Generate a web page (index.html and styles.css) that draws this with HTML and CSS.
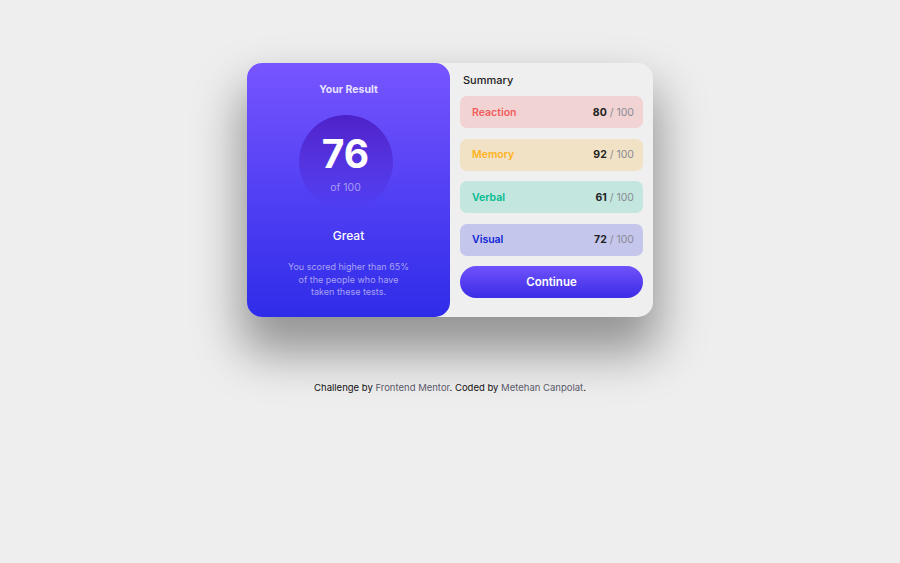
FILE: index.html
```html
<!DOCTYPE html>
<html lang="en">
<head>
<meta charset="utf-8">
<title>Results summary</title>
<link rel="stylesheet" href="styles.css">
</head>
<body>
<main class="card">
  <section class="result">
    <h1 class="result-title">Your Result</h1>
    <div class="score-circle">
      <span class="score">76</span>
      <span class="score-of">of 100</span>
    </div>
    <p class="grade">Great</p>
    <p class="desc">You scored higher than 65% of the people who have taken these tests.</p>
  </section>
  <section class="summary">
    <h2 class="summary-title">Summary</h2>
    <ul class="rows">
      <li class="row row-reaction"><span class="label">Reaction</span><span class="value"><b>80</b> / 100</span></li>
      <li class="row row-memory"><span class="label">Memory</span><span class="value"><b>92</b> / 100</span></li>
      <li class="row row-verbal"><span class="label">Verbal</span><span class="value"><b>61</b> / 100</span></li>
      <li class="row row-visual"><span class="label">Visual</span><span class="value"><b>72</b> / 100</span></li>
    </ul>
    <button class="continue">Continue</button>
  </section>
</main>
<footer class="attribution">
  Challenge by <a href="#">Frontend Mentor</a>. Coded by <a href="#">Metehan Canpolat</a>.
</footer>
</body>
</html>
```

FILE: styles.css
```css
* { box-sizing: border-box; }
html, body { margin: 0; padding: 0; }
body {
  background: #eeeeee;
  font-family: "Inter", "Noto Sans", sans-serif;
  display: flex;
  flex-direction: column;
  align-items: center;
  padding-top: 63px;
  min-height: 563px;
}
.card {
  display: flex;
  width: 406px;
  height: 254px;
  background: #efefef;
  border-radius: 15px;
  box-shadow: 0 30px 48px 6px rgba(0,0,0,0.38);
}
.result {
  width: 203px;
  border-radius: 15px;
  background: linear-gradient(180deg, #7755ff 0%, #2f2ce9 100%);
  display: flex;
  flex-direction: column;
  align-items: center;
  padding-top: 20px;
  text-align: center;
}
.result-title {
  margin: 0;
  font-size: 10.5px;
  font-weight: 700;
  color: #e6e2ff;
  line-height: 14px;
}
.score-circle {
  margin: 18px 6px 0 0;
  width: 94px;
  height: 94px;
  border-radius: 50%;
  background: linear-gradient(180deg, rgba(77,33,201,1) 0%, rgba(37,33,201,0) 100%);
  display: flex;
  flex-direction: column;
  align-items: center;
  padding-top: 17px;
}
.score {
  font-size: 39px;
  font-weight: 700;
  color: #ffffff;
  line-height: 44px;
}
.score-of {
  margin-top: 5px;
  font-size: 10.5px;
  color: #a99cf5;
  line-height: 14px;
}
.grade {
  margin: 19px 0 0;
  font-size: 12px;
  font-weight: 500;
  color: #ffffff;
  line-height: 16px;
}
.desc {
  margin: 17px 0 0;
  width: 124px;
  font-size: 9px;
  line-height: 12.5px;
  color: #a8a3f3;
}
.summary {
  flex: 1;
  padding: 9px 10px 0;
  display: flex;
  flex-direction: column;
}
.summary-title {
  margin: 0 0 0 3px;
  font-size: 11px;
  font-weight: 500;
  color: #1a1a1a;
  line-height: 16px;
}
.rows {
  list-style: none;
  margin: 8px 0 0;
  padding: 0;
  display: flex;
  flex-direction: column;
  gap: 10.5px;
}
.row {
  height: 32px;
  border-radius: 7px;
  display: flex;
  align-items: center;
  justify-content: space-between;
  padding: 0 9px 0 12px;
  font-size: 10.5px;
}
.label { font-weight: 600; }
.value { color: #8a8a94; }
.value b { color: #222; font-weight: 700; }
.row-reaction { background: #f1d3d3; }
.row-reaction .label { color: #f25c5c; }
.row-memory { background: #f1e2c5; }
.row-memory .label { color: #ffb21e; }
.row-verbal { background: #c3e6de; }
.row-verbal .label { color: #00bb8f; }
.row-visual { background: #c4c6ec; }
.row-visual .label { color: #1125d4; }
.continue {
  margin-top: 10.5px;
  height: 32px;
  border: 0;
  border-radius: 16px;
  background: linear-gradient(180deg, #7052fb 0%, #3b2ce6 100%);
  color: #fff;
  font-family: inherit;
  font-size: 11.5px;
  font-weight: 600;
}
.attribution {
  margin-top: 65px;
  font-size: 9.5px;
  color: #111;
}
.attribution a {
  color: #5a5a6a;
  text-decoration: none;
}
```
